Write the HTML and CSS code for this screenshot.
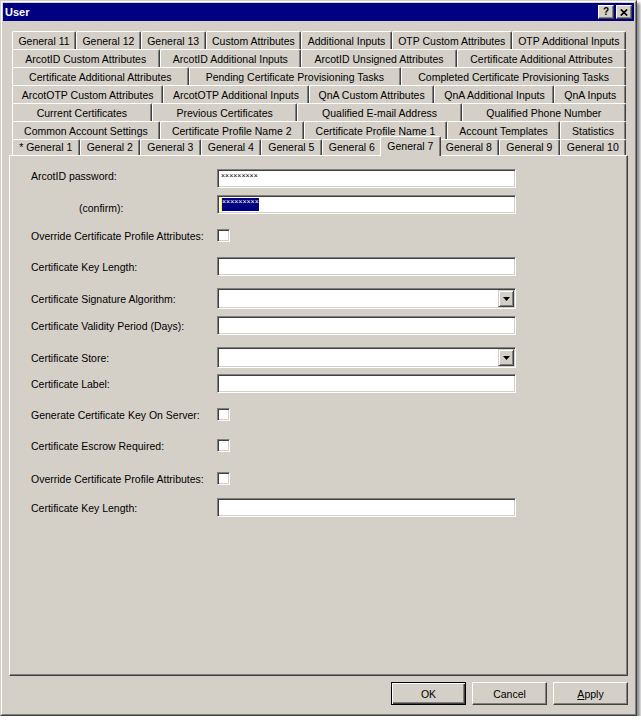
FILE: index.html
```html
<!DOCTYPE html>
<html>
<head>
<meta charset="utf-8">
<title>User</title>
<link rel="stylesheet" href="styles.css">
</head>
<body>
<div class="window">
  <div class="frame">
    <div class="titlebar">
      <span class="title">User</span>
      <div class="capbtns">
        <span class="capbtn help">?</span>
        <span class="capbtn close"><svg width="8" height="7" viewBox="0 0 8 7"><path d="M0.8 0.5 L7.2 6.5 M7.2 0.5 L0.8 6.5" stroke="#000" stroke-width="1.7" fill="none"/></svg></span>
      </div>
    </div>
    <div class="content">
      <div class="tabs">
        <div class="tabrow">
          <div class="tab">General 11</div>
          <div class="tab">General 12</div>
          <div class="tab">General 13</div>
          <div class="tab">Custom Attributes</div>
          <div class="tab">Additional Inputs</div>
          <div class="tab">OTP Custom Attributes</div>
          <div class="tab">OTP Additional Inputs</div>
        </div>
        <div class="tabrow">
          <div class="tab">ArcotID Custom Attributes</div>
          <div class="tab">ArcotID Additional Inputs</div>
          <div class="tab">ArcotID Unsigned Attributes</div>
          <div class="tab">Certificate Additional Attributes</div>
        </div>
        <div class="tabrow">
          <div class="tab">Certificate Additional Attributes</div>
          <div class="tab">Pending Certificate Provisioning Tasks</div>
          <div class="tab">Completed Certificate Provisioning Tasks</div>
        </div>
        <div class="tabrow">
          <div class="tab">ArcotOTP Custom Attributes</div>
          <div class="tab">ArcotOTP Additional Inputs</div>
          <div class="tab">QnA Custom Attributes</div>
          <div class="tab">QnA Additional Inputs</div>
          <div class="tab">QnA Inputs</div>
        </div>
        <div class="tabrow">
          <div class="tab">Current Certificates</div>
          <div class="tab">Previous Certificates</div>
          <div class="tab">Qualified E-mail Address</div>
          <div class="tab">Qualified Phone Number</div>
        </div>
        <div class="tabrow">
          <div class="tab">Common Account Settings</div>
          <div class="tab">Certificate Profile Name 2</div>
          <div class="tab">Certificate Profile Name 1</div>
          <div class="tab">Account Templates</div>
          <div class="tab">Statistics</div>
        </div>
        <div class="tabrow front">
          <div class="tab">* General 1</div>
          <div class="tab">General 2</div>
          <div class="tab">General 3</div>
          <div class="tab">General 4</div>
          <div class="tab">General 5</div>
          <div class="tab">General 6</div>
          <div class="tab sel">General 7</div>
          <div class="tab">General 8</div>
          <div class="tab">General 9</div>
          <div class="tab">General 10</div>
        </div>
      </div>
      <div class="panel">
        <div class="form">
          <div class="row">
            <label class="lbl lift">ArcotID password:</label>
            <div class="edit"><span class="pw">×××××××××</span></div>
          </div>
          <div class="row mt7">
            <label class="lbl drop indent">(confirm):</label>
            <div class="edit"><span class="pw selected">×××××××××</span></div>
          </div>
          <div class="row mt15">
            <label class="lbl">Override Certificate Profile Attributes:</label>
            <div class="check"></div>
          </div>
          <div class="row mt15">
            <label class="lbl">Certificate Key Length:</label>
            <div class="edit"></div>
          </div>
          <div class="row mt12">
            <label class="lbl">Certificate Signature Algorithm:</label>
            <div class="combo"><span class="dropbtn"><svg width="7" height="4" viewBox="0 0 7 4"><path d="M0 0 H7 L3.5 4 Z" fill="#000"/></svg></span></div>
          </div>
          <div class="row mt7">
            <label class="lbl">Certificate Validity Period (Days):</label>
            <div class="edit"></div>
          </div>
          <div class="row mt12">
            <label class="lbl">Certificate Store:</label>
            <div class="combo"><span class="dropbtn"><svg width="7" height="4" viewBox="0 0 7 4"><path d="M0 0 H7 L3.5 4 Z" fill="#000"/></svg></span></div>
          </div>
          <div class="row mt6">
            <label class="lbl">Certificate Label:</label>
            <div class="edit"></div>
          </div>
          <div class="row mt15">
            <label class="lbl">Generate Certificate Key On Server:</label>
            <div class="check"></div>
          </div>
          <div class="row mt18">
            <label class="lbl">Certificate Escrow Required:</label>
            <div class="check"></div>
          </div>
          <div class="row mt20">
            <label class="lbl">Override Certificate Profile Attributes:</label>
            <div class="check"></div>
          </div>
          <div class="row mt13">
            <label class="lbl">Certificate Key Length:</label>
            <div class="edit"></div>
          </div>
        </div>
      </div>
      <div class="buttons">
        <div class="btn default">OK</div>
        <div class="btn">Cancel</div>
        <div class="btn"><span class="u">A</span>pply</div>
      </div>
    </div>
  </div>
</div>
</body>
</html>
```
FILE: styles.css
```css
html, body {
  margin: 0;
  padding: 0;
  background: #ffffff;
}
body {
  font-family: "Liberation Sans", Arial, sans-serif;
  font-size: 10.5px;
  color: #000;
}
.window {
  width: 637px;
  height: 716px;
  box-sizing: border-box;
  background: #d4d0c8;
  border: 1px solid;
  border-color: #d4d0c8 #404040 #404040 #d4d0c8;
  box-shadow: 3px 3px 3px rgba(0, 0, 0, 0.45);
}
.frame {
  height: 100%;
  box-sizing: border-box;
  border: 1px solid;
  border-color: #ffffff #808080 #808080 #ffffff;
  padding: 1px;
  display: flex;
  flex-direction: column;
}
.titlebar {
  height: 18px;
  flex: none;
  background: #000080;
  display: flex;
  align-items: center;
  justify-content: space-between;
  padding: 0 2px;
}
.title {
  color: #fff;
  font-weight: bold;
  font-size: 11px;
}
.capbtns {
  display: flex;
  gap: 2px;
}
.capbtn {
  width: 16px;
  height: 14px;
  box-sizing: border-box;
  background: #d4d0c8;
  border: 1px solid;
  border-color: #ffffff #404040 #404040 #ffffff;
  box-shadow: inset -1px -1px #808080;
  display: flex;
  align-items: center;
  justify-content: center;
}
.help {
  font-weight: bold;
  font-size: 10px;
  line-height: 10px;
  padding-bottom: 1px;
}
.close svg {
  display: block;
}
.content {
  flex: 1;
  padding: 10px 6px 0 6px;
  display: flex;
  flex-direction: column;
}
.tabs {
  margin: 0 2px 0 3px;
}
.tabrow {
  display: flex;
  height: 18px;
}
.tabrow.front {
  height: 16px;
}
.tab {
  flex: 1 1 auto;
  min-width: 0;
  height: 18px;
  box-sizing: border-box;
  padding: 0 5px;
  border-top: 1px solid #ffffff;
  border-left: 1px solid #ffffff;
  border-right: 1px solid #404040;
  border-radius: 2px 2px 0 0;
  box-shadow: inset -1px 0 #808080;
  background: #d4d0c8;
  display: flex;
  align-items: center;
  justify-content: center;
  white-space: nowrap;
}
.front .tab {
  height: 16px;
  padding-bottom: 1px;
}
.front .tab.sel {
  position: relative;
  top: -3px;
  height: 20px;
  margin: 0 -2px;
  z-index: 2;
  padding-bottom: 1px;
}
.panel {
  height: 521px;
  flex: none;
  box-sizing: border-box;
  border: 1px solid;
  border-color: #ffffff #404040 #404040 #ffffff;
  box-shadow: inset -1px -1px #808080;
}
.form {
  padding: 13px 0 0 21px;
}
.row {
  display: flex;
  align-items: center;
}
.mt6 { margin-top: 6px; }
.mt7 { margin-top: 7px; }
.mt12 { margin-top: 12px; }
.mt13 { margin-top: 13px; }
.mt15 { margin-top: 15px; }
.mt18 { margin-top: 18px; }
.mt20 { margin-top: 20px; }
.lbl {
  width: 186px;
  flex: none;
  white-space: nowrap;
}
.lbl.lift {
  padding-bottom: 6px;
}
.lbl.drop {
  padding-top: 6px;
}
.lbl.indent {
  box-sizing: border-box;
  padding-left: 48px;
}
.edit, .combo {
  width: 299px;
  height: 19px;
  box-sizing: border-box;
  background: #fff;
  border: 1px solid;
  border-color: #808080 #ffffff #ffffff #808080;
  box-shadow: inset 1px 1px #404040, inset -1px -1px #d4d0c8;
}
.edit {
  padding: 2px 0 0 3px;
}
.combo {
  height: 21px;
  padding: 1px;
  display: flex;
  justify-content: flex-end;
}
.dropbtn {
  width: 16px;
  height: 17px;
  box-sizing: border-box;
  background: #d4d0c8;
  border: 1px solid;
  border-color: #d4d0c8 #404040 #404040 #d4d0c8;
  box-shadow: inset 1px 1px #ffffff, inset -1px -1px #808080;
  display: flex;
  align-items: center;
  justify-content: center;
}
.dropbtn svg {
  display: block;
}
.pw {
  display: inline-block;
  height: 13px;
  font-size: 7px;
  line-height: 8px;
  vertical-align: top;
}
.pw.selected {
  background: #000080;
  color: #ffffff;
  border-left: 1px solid #ffff00;
}
.check {
  width: 13px;
  height: 13px;
  box-sizing: border-box;
  background: #fff;
  border: 1px solid;
  border-color: #808080 #ffffff #ffffff #808080;
  box-shadow: inset 1px 1px #404040, inset -1px -1px #d4d0c8;
}
.buttons {
  display: flex;
  justify-content: flex-end;
  gap: 6px;
  margin-top: 6px;
}
.btn {
  width: 75px;
  height: 23px;
  box-sizing: border-box;
  background: #d4d0c8;
  border: 1px solid;
  border-color: #ffffff #404040 #404040 #ffffff;
  box-shadow: inset -1px -1px #808080;
  display: flex;
  align-items: center;
  justify-content: center;
}
.btn.default {
  border-color: #000;
  box-shadow: inset 1px 1px #ffffff, inset -1px -1px #404040, inset -2px -2px #808080;
}
.u {
  text-decoration: underline;
}
```
